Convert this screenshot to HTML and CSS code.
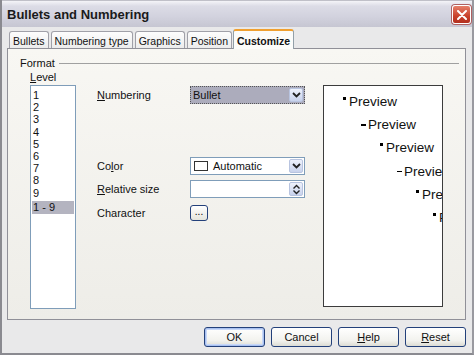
FILE: index.html
```html
<!DOCTYPE html>
<html lang="en">
<head>
    <meta charset="UTF-8">
    <title>Bullets and Numbering</title>
    <link rel="stylesheet" href="styles.css">
</head>
<body>
    <div class="window">
        <div class="titlebar">
            <span class="title">Bullets and Numbering</span>
            <button class="close-btn" aria-label="Close">
                <svg width="10" height="10" viewBox="0 0 10 10">
                    <path d="M1 1 L9 9 M9 1 L1 9" stroke="#fff" stroke-width="2" stroke-linecap="round"/>
                </svg>
            </button>
        </div>

        <div class="dialog">
            <div class="tabs">
                <div class="tab">Bullets</div>
                <div class="tab">Numbering type</div>
                <div class="tab">Graphics</div>
                <div class="tab">Position</div>
                <div class="tab active">Customize</div>
            </div>

            <div class="panel">
                <div class="legend">
                    <span>Format</span>
                    <div class="legend-line"></div>
                </div>

                <div class="format">
                    <div class="level-col">
                        <div class="field-label"><u>L</u>evel</div>
                        <ul class="level-list">
                            <li>1</li>
                            <li>2</li>
                            <li>3</li>
                            <li>4</li>
                            <li>5</li>
                            <li>6</li>
                            <li>7</li>
                            <li>8</li>
                            <li>9</li>
                            <li class="selected">1 - 9</li>
                        </ul>
                    </div>

                    <div class="form">
                        <div class="form-row row-numbering">
                            <label><u>N</u>umbering</label>
                            <div class="combo focused">
                                <span class="combo-text">Bullet</span>
                                <span class="combo-btn">
                                    <svg width="9" height="6" viewBox="0 0 9 6"><path d="M1 1 L4.5 4.5 L8 1" fill="none" stroke="#222" stroke-width="1.8"/></svg>
                                </span>
                            </div>
                        </div>
                        <div class="form-row row-color">
                            <label>Co<u>l</u>or</label>
                            <div class="combo">
                                <span class="swatch"></span>
                                <span class="combo-text">Automatic</span>
                                <span class="combo-btn">
                                    <svg width="9" height="6" viewBox="0 0 9 6"><path d="M1 1 L4.5 4.5 L8 1" fill="none" stroke="#222" stroke-width="1.8"/></svg>
                                </span>
                            </div>
                        </div>
                        <div class="form-row row-size">
                            <label><u>R</u>elative size</label>
                            <div class="spin">
                                <span class="spin-btn">
                                    <svg width="9" height="11" viewBox="0 0 9 11"><path d="M1.5 4.5 L4.5 1.5 L7.5 4.5 M1.5 6.5 L4.5 9.5 L7.5 6.5" fill="none" stroke="#222" stroke-width="1.4"/></svg>
                                </span>
                            </div>
                        </div>
                        <div class="form-row row-char">
                            <label>Character</label>
                            <button class="dots-btn">...</button>
                        </div>
                    </div>

                    <div class="preview">
                        <div class="pv lvl1"><span class="bullet"></span>Preview</div>
                        <div class="pv lvl2"><span class="dash"></span>Preview</div>
                        <div class="pv lvl3"><span class="bullet"></span>Preview</div>
                        <div class="pv lvl4"><span class="dash"></span>Preview</div>
                        <div class="pv lvl5"><span class="bullet"></span>Preview</div>
                        <div class="pv lvl6"><span class="bullet"></span>Preview</div>
                    </div>
                </div>
            </div>

            <div class="buttons">
                <button class="btn default">OK</button>
                <button class="btn">Cancel</button>
                <button class="btn"><u>H</u>elp</button>
                <button class="btn"><u>R</u>eset</button>
            </div>
        </div>
    </div>
</body>
</html>
```

FILE: styles.css
```css
:root {
    --dialog-bg: #e9e9ea;
    --panel-top: #f8f7f3;
    --panel-bottom: #eeede8;
    --field-border: #7f9db9;
    --btn-border: #23407a;
    --text: #111;
}

* {
    box-sizing: border-box;
}

body {
    margin: 0;
    width: 474px;
    height: 355px;
    overflow: hidden;
    font-family: 'Liberation Sans', Arial, sans-serif;
    font-size: 11px;
    color: var(--text);
    background: #fff;
}

u {
    text-decoration: underline;
    text-underline-offset: 1px;
}

.window {
    width: 474px;
    height: 355px;
    display: flex;
    flex-direction: column;
    border-left: 2px solid #8a8a90;
    border-right: 2px solid #9a9aa0;
    border-bottom: 2px solid #8a8a90;
    background: var(--dialog-bg);
}

/* title bar */
.titlebar {
    height: 27px;
    flex: none;
    display: flex;
    align-items: center;
    justify-content: space-between;
    padding: 0 1px 0 5px;
    background: linear-gradient(#f4f4f8 0%, #dcdce6 20%, #d2d2de 60%, #c6c6d2 100%);
    border-top: 1px solid #c0c0c8;
}

.title {
    font-size: 13px;
    font-weight: bold;
    color: #1a1a1a;
    padding-top: 1px;
}

.close-btn {
    width: 19px;
    height: 19px;
    margin-top: 1px;
    padding: 0;
    display: flex;
    align-items: center;
    justify-content: center;
    border: 1px solid #fff;
    border-radius: 3px;
    background: linear-gradient(#e6806a, #c8402a 60%, #b23020);
    box-shadow: 0 0 0 1px #b06060;
}

/* dialog body */
.dialog {
    flex: 1;
    display: flex;
    flex-direction: column;
    padding: 0 5px 0 5px;
}

.tabs {
    display: flex;
    align-items: flex-end;
    gap: 2px;
    height: 21px;
    padding-left: 2px;
    position: relative;
    z-index: 1;
    font-size: 10.5px;
}

.tab {
    height: 17px;
    padding: 3px 3px 0 3px;
    background: linear-gradient(#fdfdfd, #ececec);
    border: 1px solid #a0a0a8;
    border-bottom: none;
    border-radius: 3px 3px 0 0;
}

.tab.active {
    height: 20px;
    margin-left: -1px;
    padding: 4px 3px 0 3px;
    font-weight: bold;
    background: #fcfcfa;
    border-top: 2px solid #f0a030;
    border-color: #f0a030 #93a0a8 transparent #93a0a8;
    margin-bottom: -1px;
}

.panel {
    height: 272px;
    width: 459px;
    border: 1px solid #909098;
    background: linear-gradient(var(--panel-top), var(--panel-bottom));
    padding: 7px 0 0 12px;
}

.legend {
    display: flex;
    align-items: center;
    gap: 4px;
    height: 14px;
}

.legend-line {
    flex: 1;
    height: 1px;
    margin-right: 6px;
    background: #a0a0a0;
}

.format {
    display: flex;
    margin-top: 1px;
}

.level-col {
    width: 77px;
    flex: none;
    padding-left: 10px;
}

.field-label {
    height: 12px;
    line-height: 12px;
    margin-bottom: 2px;
}

.level-list {
    list-style: none;
    margin: 0;
    padding: 3px 1px 0 1px;
    width: 46px;
    height: 224px;
    background: #fff;
    border: 1px solid var(--field-border);
}

.level-list li {
    height: 12.2px;
    line-height: 12px;
    padding-left: 1px;
}

.level-list li.selected {
    margin-top: 2px;
    height: 13px;
    background: #b4b4c0;
}

/* form */
.form {
    width: 226px;
    flex: none;
}

.form-row {
    display: grid;
    grid-template-columns: 93px 115px;
    align-items: center;
}

.row-numbering {
    margin-top: 15px;
}

.row-color {
    margin-top: 53px;
}

.row-size {
    margin-top: 5px;
}

.row-char {
    margin-top: 7px;
}

.combo {
    height: 18px;
    display: flex;
    align-items: center;
    background: #fff;
    border: 1px solid var(--field-border);
    padding-left: 2px;
}

.combo.focused {
    background: #acacbc;
    border: 1px dotted #555;
}

.combo-text {
    flex: 1;
}

.combo-btn,
.spin-btn {
    width: 14px;
    height: 14px;
    margin-right: 1px;
    display: flex;
    align-items: center;
    justify-content: center;
    border: 1px solid #b8c4e0;
    border-radius: 2px;
    background: linear-gradient(#eef2fc, #c8d2ec);
}

.swatch {
    width: 14px;
    height: 10px;
    margin: 0 5px 0 1px;
    border: 1px solid #333;
    background: #fff;
}

.spin {
    height: 18px;
    display: flex;
    justify-content: flex-end;
    align-items: center;
    background: #fff;
    border: 1px solid var(--field-border);
}

.dots-btn {
    width: 18px;
    height: 16px;
    padding: 0 0 3px 0;
    font-family: inherit;
    font-size: 10px;
    line-height: 8px;
    border: 1px solid var(--btn-border);
    border-radius: 3px;
    background: linear-gradient(#fff, #e4e4dc);
}

/* preview */
.preview {
    width: 120px;
    height: 222px;
    flex: none;
    margin-top: 14px;
    overflow: hidden;
    background: #fff;
    border: 1px solid #3c3c3c;
    font-size: 13.5px;
    color: #111;
    padding-top: 8px;
}

.pv {
    height: 23.2px;
    white-space: nowrap;
    display: flex;
    align-items: flex-start;
}

.bullet {
    flex: none;
    width: 3px;
    height: 3px;
    background: #000;
    margin: 3px 3px 0 0;
}

.dash {
    flex: none;
    width: 5px;
    height: 1.5px;
    background: #000;
    margin: 7px 2px 0 0;
}

.lvl1 { padding-left: 19px; }
.lvl2 { padding-left: 37px; }
.lvl3 { padding-left: 56px; }
.lvl4 { padding-left: 73px; }
.lvl5 { padding-left: 92px; }
.lvl6 { padding-left: 109px; }

/* bottom buttons */
.buttons {
    display: flex;
    justify-content: flex-end;
    gap: 6px;
    padding-top: 7px;
    padding-right: 1px;
}

.btn {
    width: 61px;
    height: 20px;
    font-family: inherit;
    font-size: 11px;
    color: var(--text);
    border: 1px solid var(--btn-border);
    border-radius: 3px;
    background: linear-gradient(#ffffff, #f2f2ee 70%, #dcdcd4);
}

.btn.default {
    box-shadow: inset 0 0 0 1px #a8c0f0, inset 0 0 0 2px #c8d8f8;
}
```
